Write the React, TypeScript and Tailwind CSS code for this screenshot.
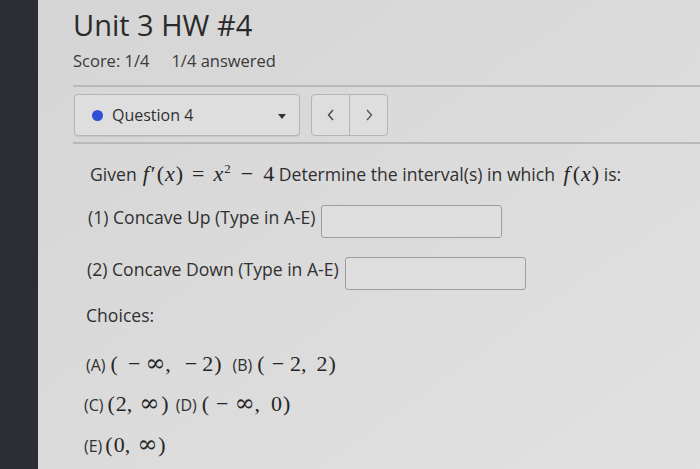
import React from "react";

const M = ({ children, className = "" }: { children: React.ReactNode; className?: string }) => (
  <span className={"flex items-baseline font-['Liberation_Serif','DejaVu_Serif',serif] text-[#262626] " + className}>
    {children}
  </span>
);
const I = ({ children, className = "" }: { children: React.ReactNode; className?: string }) => (
  <span className={"italic " + className}>{children}</span>
);
const Inf = ({ className = "" }: { className?: string }) => (
  <span className={"font-['DejaVu_Serif',serif] text-[24px] leading-none " + className}>∞</span>
);

export default function App() {
  return (
    <div className="flex h-[469px] w-[700px] overflow-hidden font-['Open_Sans',sans-serif] text-[#303030]">
      <div className="w-[38px] shrink-0 bg-[#2b2e33]" />
      <div className="flex-1 bg-linear-to-br from-[#d5d5d5] to-[#e1e1e1] pl-[35px]">
        <h1 className="mt-[10px] text-[29px] leading-[30px] text-[#2a2a2a]">Unit 3 HW #4</h1>
        <div className="mt-[11px] flex text-[16.5px] leading-[20px] text-[#3a3a3a]">
          <span>Score: 1/4</span>
          <span className="ml-[22px]">1/4 answered</span>
        </div>
        <div className="mt-[14px] border-t-2 border-[#b9b9b9]" />
        <div className="mt-[7px] flex h-[42px]">
          <div className="ml-[1px] flex w-[226px] items-center rounded-[4px] border border-[#b5b5b5] bg-[#dedede] shadow-[0_1px_1px_rgba(0,0,0,0.08)]">
            <span className="ml-[17px] h-[11px] w-[11px] rounded-full bg-[#2f4fd6]" />
            <span className="ml-[9px] text-[16px] leading-[20px]">Question 4</span>
            <svg className="ml-auto mr-[13px] mt-[3px]" width="8" height="5" viewBox="0 0 8 5">
              <path d="M0 0 L8 0 L4 5 Z" fill="#333" />
            </svg>
          </div>
          <div className="ml-[11px] flex w-[77px] rounded-[4px] border border-[#b5b5b5] bg-[#dedede]">
            <div className="flex w-[38px] items-center justify-center border-r border-[#b5b5b5]">
              <svg width="8" height="12" viewBox="0 0 8 12">
                <path d="M6 1 L1.5 6 L6 11" fill="none" stroke="#444" strokeWidth="1.4" />
              </svg>
            </div>
            <div className="flex flex-1 items-center justify-center">
              <svg width="8" height="12" viewBox="0 0 8 12">
                <path d="M2 1 L6.5 6 L2 11" fill="none" stroke="#555" strokeWidth="1.4" />
              </svg>
            </div>
          </div>
        </div>
        <div className="mt-[6px] border-t-2 border-[#b9b9b9]" />

        <div className="pl-[15px] text-[17.6px]">
          <div className="ml-[2px] mt-[13px] flex h-[30px] items-baseline whitespace-pre">
            <span>Given</span>
            <M className="ml-[6px] text-[22px]">
              <I>f</I>
              <span className="ml-[2px] mr-[1px]">′</span>
              <span>(</span>
              <I className="mx-[1px]">x</I>
              <span>)</span>
              <span className="mx-[9px]">=</span>
              <I>x</I>
              <span className="relative -top-[8px] ml-[1px] text-[13px]">2</span>
              <span className="ml-[10px] mr-[10px]">−</span>
              <span>4</span>
            </M>
            <span> Determine the interval(s) in which </span>
            <M className="ml-[4px] text-[22px]">
              <I>f</I>
              <span className="ml-[3px]">(</span>
              <I className="mx-[1px]">x</I>
              <span>)</span>
            </M>
            <span> is:</span>
          </div>
          <div className="mt-[18px] flex h-[33px] items-center">
            <span className="mb-[9px]">(1) Concave Up (Type in A-E)</span>
            <div className="ml-[5px] h-[33px] w-[181px] rounded-[3px] border-[1.5px] border-[#9d9d9d] bg-[#dfdfdf]" />
          </div>
          <div className="-ml-[1px] mt-[19px] flex h-[33px] items-center">
            <span className="mb-[9px]">(2) Concave Down (Type in A-E)</span>
            <div className="ml-[6px] h-[33px] w-[181px] rounded-[3px] border-[1.5px] border-[#9d9d9d] bg-[#dfdfdf]" />
          </div>
          <div className="-ml-[2px] mt-[15px] h-[20px] leading-[20px]">Choices:</div>

          <div className="-ml-[2px] mt-[20px] flex h-[30px] items-baseline whitespace-pre pt-[2px]">
            <span className="text-[16px]">(A)</span>
            <M className="ml-[5px] text-[22px]">
              <span>(</span>
              <span className="ml-[10px] mr-[5px]">−</span>
              <Inf />
              <span>,</span>
              <span className="ml-[14px] mr-[5px]">−</span>
              <span>2</span>
              <span className="ml-[1px]">)</span>
            </M>
            <span className="ml-[11px] text-[16px]">(B)</span>
            <M className="ml-[5px] text-[22px]">
              <span>(</span>
              <span className="ml-[7px] mr-[6px]">−</span>
              <span>2</span>
              <span>,</span>
              <span className="ml-[10px]">2</span>
              <span className="ml-[1px]">)</span>
            </M>
          </div>
          <div className="-ml-[4px] mt-[10px] flex h-[30px] items-baseline whitespace-pre pt-[2px]">
            <span className="text-[16px]">(C)</span>
            <M className="ml-[4px] text-[22px]">
              <span>(</span>
              <span className="ml-[1px]">2</span>
              <span>,</span>
              <Inf className="ml-[7px]" />
              <span className="ml-[2px]">)</span>
            </M>
            <span className="ml-[7px] text-[16px]">(D)</span>
            <M className="ml-[5px] text-[22px]">
              <span>(</span>
              <span className="ml-[7px] mr-[6px]">−</span>
              <Inf />
              <span>,</span>
              <span className="ml-[11px]">0</span>
              <span className="ml-[1px]">)</span>
            </M>
          </div>
          <div className="-ml-[4px] mt-[11px] flex h-[30px] items-baseline whitespace-pre pt-[2px]">
            <span className="text-[16px]">(E)</span>
            <M className="ml-[3px] text-[22px]">
              <span>(</span>
              <span className="ml-[1px]">0</span>
              <span>,</span>
              <Inf className="ml-[7px]" />
              <span className="ml-[1px]">)</span>
            </M>
          </div>
        </div>
      </div>
    </div>
  );
}
